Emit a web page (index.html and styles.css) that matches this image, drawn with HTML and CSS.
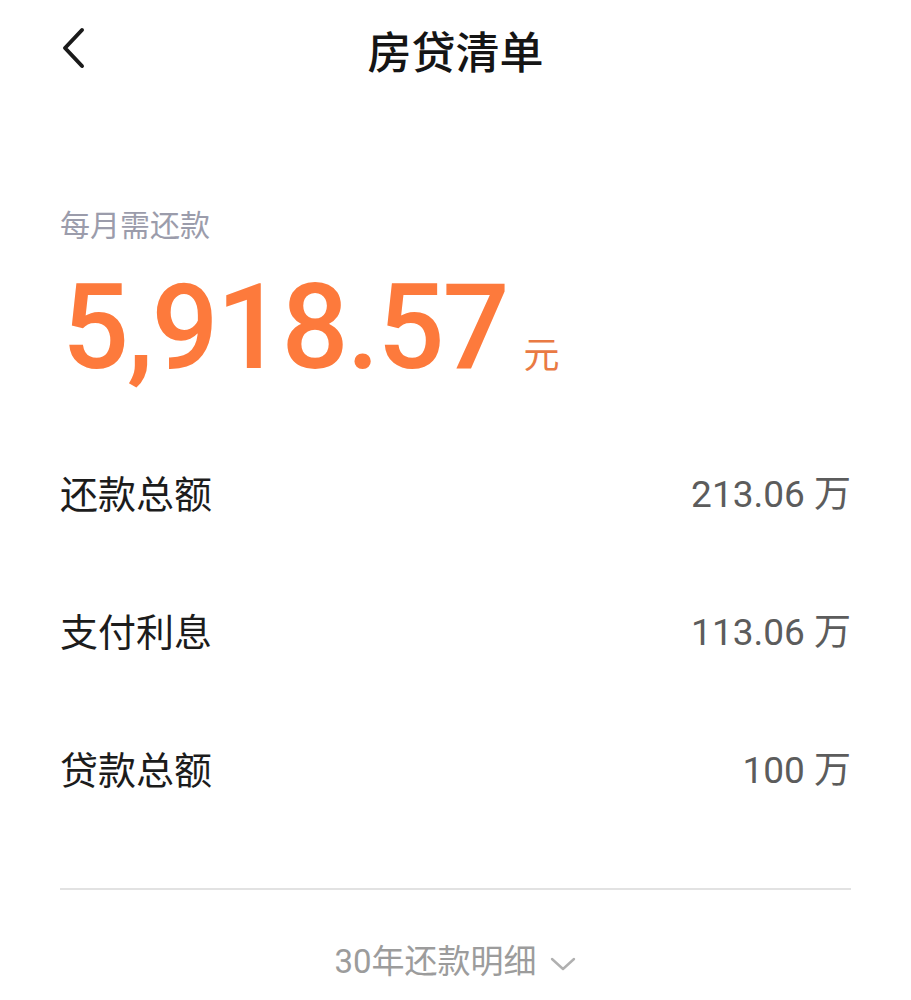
FILE: index.html
```html
<!DOCTYPE html>
<html lang="zh-CN">
<head>
<meta charset="utf-8">
<title>房贷清单</title>
<link rel="stylesheet" href="styles.css">
</head>
<body>
<div class="page">
  <header class="topbar">
    <span class="back">
      <svg width="28" height="44" viewBox="0 0 28 44"><path d="M22 4 L5 22 L22 40" fill="none" stroke="#1a1a1a" stroke-width="4" stroke-linecap="round" stroke-linejoin="round"/></svg>
    </span>
    <h1 class="title">房贷清单</h1>
  </header>

  <section class="summary">
    <div class="label">每月需还款</div>
    <div class="amount"><span class="num">5,918.57</span><span class="unit">元</span></div>
  </section>

  <section class="rows">
    <div class="row"><span class="k">还款总额</span><span class="v">213.06 万</span></div>
    <div class="row"><span class="k">支付利息</span><span class="v">113.06 万</span></div>
    <div class="row"><span class="k">贷款总额</span><span class="v">100 万</span></div>
  </section>

  <div class="divider"></div>

  <div class="detail">
    <span>30年还款明细</span>
    <svg width="28" height="16" viewBox="0 0 28 16"><path d="M3 3 L14 13 L25 3" fill="none" stroke="#b0b0b0" stroke-width="2.4" stroke-linecap="round" stroke-linejoin="round"/></svg>
  </div>
</div>
</body>
</html>
```

FILE: styles.css
```css
html, body {
  margin: 0;
  padding: 0;
  background: #ffffff;
}
body {
  font-family: "Roboto", "Noto Sans CJK SC", sans-serif;
  color: #1a1a1a;
}
.page {
  width: 911px;
  height: 1000px;
  overflow: hidden;
  padding: 0 60px;
  box-sizing: border-box;
}
.topbar {
  position: relative;
  height: 100px;
  display: flex;
  align-items: center;
  justify-content: center;
}
.back {
  position: absolute;
  left: 0;
  top: 26px;
  display: flex;
}
.title {
  margin: 0;
  font-family: "Noto Sans CJK SC", sans-serif;
  font-size: 44px;
  font-weight: 500;
  letter-spacing: 0;
  color: #151515;
}
.summary {
  padding-top: 108px;
}
.label {
  font-family: "Noto Sans CJK SC", sans-serif;
  font-size: 30px;
  color: #9b9cab;
  line-height: 30px;
}
.amount {
  display: flex;
  align-items: baseline;
  margin-top: 31px;
  color: #fd7a3c;
}
.num {
  font-family: "Roboto", sans-serif;
  font-size: 118px;
  font-weight: 500;
  line-height: 118px;
  letter-spacing: -2px;
  margin-left: 2px;
}
.unit {
  font-family: "Noto Sans CJK SC", sans-serif;
  font-size: 36px;
  color: #e97a44;
  margin-left: 16px;
}
.rows {
  margin-top: 85px;
  display: flex;
  flex-direction: column;
  gap: 100px;
}
.row {
  display: flex;
  justify-content: space-between;
  align-items: center;
  height: 38px;
}
.k {
  font-family: "Noto Sans CJK SC", sans-serif;
  font-size: 38px;
  color: #1c1c1c;
}
.v {
  font-family: "Roboto", "Noto Sans CJK SC", sans-serif;
  font-size: 37px;
  color: #5c5c5c;
}
.divider {
  margin-top: 102px;
  height: 2px;
  background: #e2e2e2;
}
.detail {
  display: flex;
  justify-content: center;
  align-items: center;
  gap: 12px;
  margin-top: 52px;
  font-family: "Roboto", "Noto Sans CJK SC", sans-serif;
  font-size: 33px;
  line-height: 40px;
  color: #9c9c9c;
}
.detail svg {
  margin-top: 4px;
}
```
